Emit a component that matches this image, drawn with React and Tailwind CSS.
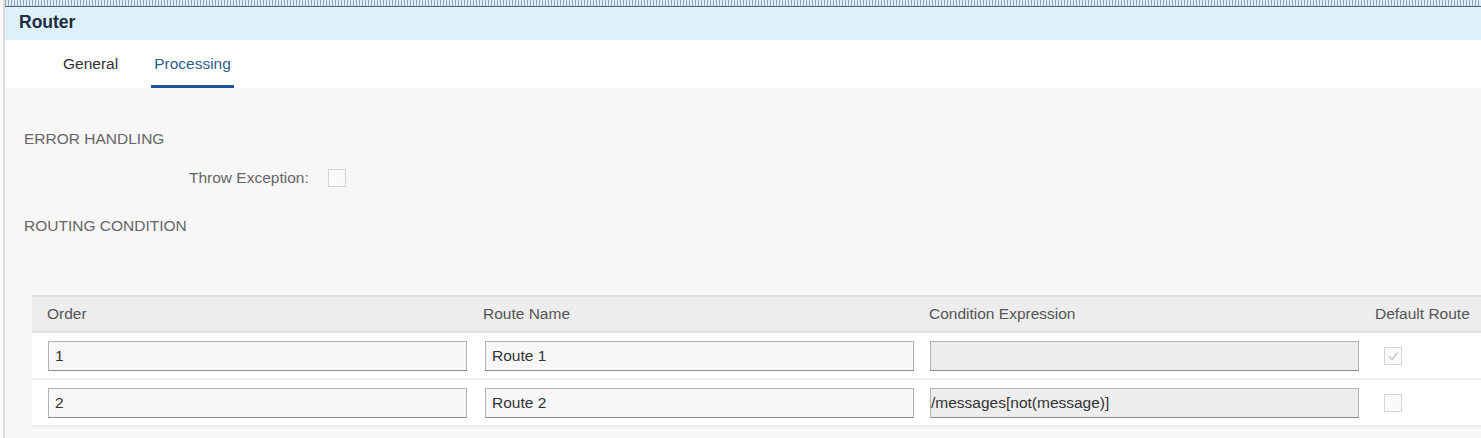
import React from "react";

const font = { fontFamily: '"Liberation Sans", Arial, sans-serif' };

function Check({ checked, className = "" }) {
  return (
    <div className={"w-[18px] h-[18px] border border-[#d5d5d5] bg-[#fafafa] flex items-center justify-center " + className}>
      {checked && (
        <svg width="12" height="12" viewBox="0 0 12 12" fill="none">
          <path d="M2 6.5 L5 9.5 L10.5 2.5" stroke="#c4c4c4" strokeWidth="1.3" />
        </svg>
      )}
    </div>
  );
}

function Input({ value, dim, flush }) {
  return (
    <div
      className={
        "h-[30px] w-full border border-[#b3b3b3] border-b-[#8c8c8c] flex items-center text-[15.5px] text-[#333] overflow-hidden whitespace-nowrap " +
        (dim ? "bg-[#ededed] " : "bg-[#f7f7f7] ") +
        (flush ? "pl-0" : "pl-[6px]")
      }
    >
      {value}
    </div>
  );
}

const rows = [
  { order: "1", name: "Route 1", cond: "", def: true },
  { order: "2", name: "Route 2", cond: "/messages[not(message)]", def: false },
];

export default function App() {
  return (
    <div style={font} className="w-[1481px] h-[438px] overflow-hidden bg-[#fbfbfb] pl-[3px]">
      <div className="h-full border-l-2 border-[#dcdcdc] flex flex-col">
        <div className="h-[7px] bg-[repeating-linear-gradient(90deg,#8fa5b5_0px,#8fa5b5_1px,#dfeefb_1px,#dfeefb_3px)] border-b border-[#4a6070]"></div>
        <div className="h-[33px] bg-[#dff0fd] flex items-center pl-[14px] pb-[3px]">
          <span className="text-[17.5px] font-bold text-[#1d2d3e]">Router</span>
        </div>
        <div className="h-[48px] bg-white flex items-stretch pl-[58px]">
          <div className="flex items-center text-[15.5px] text-[#333] pb-[1px]">General</div>
          <div className="ml-[33px] px-[3px] flex items-center text-[15.5px] text-[#2f5d8a] border-b-[3px] border-[#1a5599] pt-[3px]">
            Processing
          </div>
        </div>
        <div className="flex-1 bg-[#f7f7f7] pt-[41px]">
          <div className="pl-[19px] h-[20px] flex items-center text-[15.5px] text-[#666]">ERROR HANDLING</div>
          <div className="mt-[19px] h-[20px] flex items-center pl-[184px]">
            <span className="text-[15.5px] text-[#666]">Throw Exception:</span>
            <Check className="ml-[19px]" />
          </div>
          <div className="mt-[28px] pl-[19px] h-[20px] flex items-center text-[15.5px] text-[#666]">ROUTING CONDITION</div>
          <div className="mt-[59px] ml-[27px] border-t-2 border-[#dedede]">
            <div className="grid grid-cols-[436px_446px_446px_1fr] h-[36px] bg-[#ededed] border-b-2 border-[#e0e0e0] text-[15.5px] text-[#555] items-center">
              <div className="pl-[15px]">Order</div>
              <div className="pl-[15px]">Route Name</div>
              <div className="pl-[15px]">Condition Expression</div>
              <div className="pl-[15px]">Default Route</div>
            </div>
            {rows.map((r) => (
              <div key={r.order} className="grid grid-cols-[436px_446px_446px_1fr] h-[47px] bg-white border-b-2 border-[#ececec] items-center">
                <div className="pl-[16px] pr-px"><Input value={r.order} /></div>
                <div className="pl-[17px]"><Input value={r.name} /></div>
                <div className="pl-[16px] pr-px"><Input value={r.cond} dim flush /></div>
                <div className="pl-[24px]"><Check checked={r.def} /></div>
              </div>
            ))}
          </div>
        </div>
      </div>
    </div>
  );
}
